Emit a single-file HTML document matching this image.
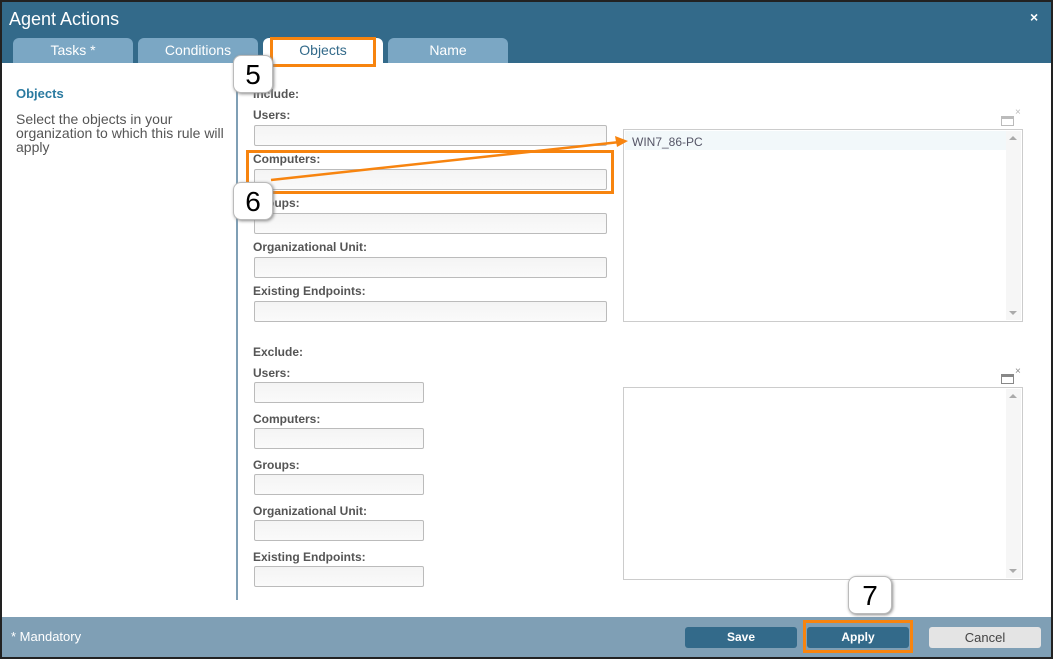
<!DOCTYPE html>
<html><head><style>
*{box-sizing:border-box;margin:0;padding:0}
body{width:1053px;height:659px;background:#222;font-family:"Liberation Sans",sans-serif;position:relative;overflow:hidden}
.a{position:absolute}
.win{left:2px;top:2px;width:1049px;height:655px;background:#fff}
.tb{left:2px;top:2px;width:1049px;height:61px;background:#336a8a}
.tab{top:38px;height:25px;background:#7ba7c4;border-radius:6px 6px 0 0;color:#fff;font-size:14px;text-align:center;line-height:25px}
.lbl{font-size:12px;color:#555;font-weight:bold;left:253px}
.in{height:21px;border:1px solid #bbb;border-radius:2px;background:linear-gradient(#f4f4f4,#fafafa);left:254px}
.box{border:1px solid #ccc;background:#fff;width:400px;height:193px;left:623px}
.sb{right:1px;top:1px;bottom:1px;width:15px;background:#f6f6f6}
.or{border:3px solid #f7840f}
.bub{background:#fff;border:1px solid #bbb;border-radius:8px;font-size:28px;color:#000;text-align:center;box-shadow:1px 1px 3px #888}
.btn{top:627px;height:21px;border-radius:3px;font-size:12px;font-weight:bold;text-align:center;line-height:21px}
</style></head><body>
<div class="a win"></div>
<div class="a tb"></div>
<div class="a" style="left:9px;top:9px;color:#fff;font-size:18px">Agent Actions</div>
<div class="a" style="left:1030px;top:9px;color:#fff;font-size:14px;font-weight:bold">×</div>
<div class="a tab" style="left:13px;width:120px">Tasks *</div>
<div class="a tab" style="left:138px;width:120px">Conditions</div>
<div class="a tab" style="left:263px;width:120px;background:#fff;color:#336a8a">Objects</div>
<div class="a tab" style="left:388px;width:120px">Name</div>
<div class="a" style="left:236px;top:63px;width:2px;height:537px;background:#7f9fb5"></div>
<div class="a" style="left:16px;top:86px;font-size:13px;font-weight:bold;color:#2a7aa0">Objects</div>
<div class="a" style="left:16px;top:112px;font-size:14px;color:#555;line-height:14px;width:210px">Select the objects in your organization to which this rule will apply</div>
<div class="a lbl" style="top:87px">Include:</div>
<div class="a lbl" style="top:108px">Users:</div><div class="a in" style="top:125px;width:353px"></div>
<div class="a lbl" style="top:152px">Computers:</div><div class="a in" style="top:169px;width:353px"></div>
<div class="a lbl" style="top:196px">Groups:</div><div class="a in" style="top:213px;width:353px"></div>
<div class="a lbl" style="top:240px">Organizational Unit:</div><div class="a in" style="top:257px;width:353px"></div>
<div class="a lbl" style="top:284px">Existing Endpoints:</div><div class="a in" style="top:301px;width:353px"></div>
<div class="a lbl" style="top:345px">Exclude:</div>
<div class="a lbl" style="top:366px">Users:</div><div class="a in" style="top:382px;width:170px"></div>
<div class="a lbl" style="top:412px">Computers:</div><div class="a in" style="top:428px;width:170px"></div>
<div class="a lbl" style="top:458px">Groups:</div><div class="a in" style="top:474px;width:170px"></div>
<div class="a lbl" style="top:504px">Organizational Unit:</div><div class="a in" style="top:520px;width:170px"></div>
<div class="a lbl" style="top:550px">Existing Endpoints:</div><div class="a in" style="top:566px;width:170px"></div>
<div class="a box" style="top:129px"><div class="a" style="left:1px;top:1px;width:382px;height:19px;background:#f2f8fa;font-size:12px;color:#556;padding:4px 7px">WIN7_86-PC</div><div class="a sb"></div><div class="a" style="right:5px;top:6px;border:4px solid transparent;border-bottom:4px solid #aaa;border-top:0"></div><div class="a" style="right:5px;bottom:6px;border:4px solid transparent;border-top:4px solid #aaa;border-bottom:0"></div></div>
<div class="a box" style="top:387px"><div class="a sb"></div><div class="a" style="right:5px;top:6px;border:4px solid transparent;border-bottom:4px solid #aaa;border-top:0"></div><div class="a" style="right:5px;bottom:6px;border:4px solid transparent;border-top:4px solid #aaa;border-bottom:0"></div></div>
<div class="a" style="left:1001px;top:116px;width:13px;height:10px;border:1px solid #bbb;border-top-width:3px"></div><div class="a" style="left:1015px;top:107px;font-size:10px;color:#bbb">×</div>
<div class="a" style="left:1001px;top:374px;width:13px;height:10px;border:1px solid #888;border-top-width:3px"></div><div class="a" style="left:1015px;top:366px;font-size:10px;color:#888">×</div>
<div class="a" style="left:2px;top:617px;width:1049px;height:40px;background:#7f9fb5"></div>
<div class="a" style="left:11px;top:629px;font-size:13px;color:#fff">* Mandatory</div>
<div class="a btn" style="left:685px;width:112px;background:#336a8a;color:#fff">Save</div>
<div class="a btn" style="left:807px;width:102px;background:#336a8a;color:#fff">Apply</div>
<div class="a btn" style="left:929px;width:112px;background:#e4e4e4;color:#444;font-weight:normal;font-size:13px">Cancel</div>
<div class="a or" style="left:270px;top:37px;width:106px;height:30px"></div>
<div class="a or" style="left:246px;top:150px;width:368px;height:44px"></div>
<div class="a or" style="left:803px;top:620px;width:110px;height:33px"></div>
<svg class="a" style="left:0;top:0" width="1053" height="659"><line x1="271" y1="180" x2="620" y2="142" stroke="#f7840f" stroke-width="2.5"/><polygon points="628,141 615,136 617,147" fill="#f7840f"/></svg>
<div class="a bub" style="left:233px;top:55px;width:40px;height:38px;line-height:38px">5</div>
<div class="a bub" style="left:233px;top:182px;width:40px;height:38px;line-height:38px">6</div>
<div class="a bub" style="left:848px;top:576px;width:44px;height:38px;line-height:38px">7</div>
</body></html>
